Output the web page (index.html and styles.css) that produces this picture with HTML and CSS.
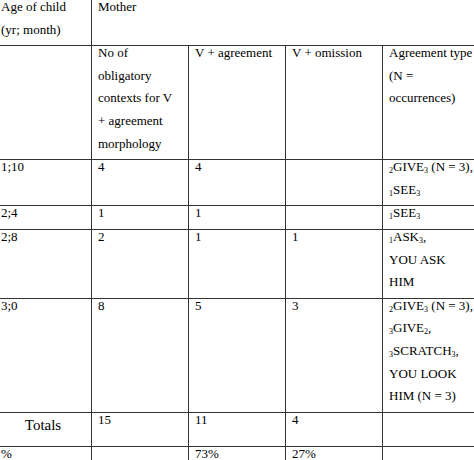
FILE: index.html
```html
<!DOCTYPE html>
<html lang="en">
<head>
<meta charset="utf-8">
<title>Agreement table</title>
<link rel="stylesheet" href="styles.css">
</head>
<body>
<table class="data">
  <colgroup>
    <col class="c"><col class="c"><col class="c"><col class="c"><col class="c">
  </colgroup>
  <tbody>
    <tr>
      <td><div class="t">Age of child (yr; month)</div></td>
      <td colspan="4"><div class="t">Mother</div></td>
    </tr>
    <tr>
      <td></td>
      <td><div class="t">No of obligatory contexts for V + agreement morphology</div></td>
      <td><div class="t">V + agreement</div></td>
      <td><div class="t">V + omission</div></td>
      <td><div class="t nw">Agreement type<br>(N =<br>occurrences)</div></td>
    </tr>
    <tr>
      <td><div class="t">1;10</div></td>
      <td><div class="t">4</div></td>
      <td><div class="t">4</div></td>
      <td></td>
      <td><div class="t nw"><sub>2</sub>GIVE<sub>3</sub> (N = 3),<br><sub>1</sub>SEE<sub>3</sub></div></td>
    </tr>
    <tr>
      <td><div class="t">2;4</div></td>
      <td><div class="t">1</div></td>
      <td><div class="t">1</div></td>
      <td></td>
      <td><div class="t nw"><sub>1</sub>SEE<sub>3</sub></div></td>
    </tr>
    <tr>
      <td><div class="t">2;8</div></td>
      <td><div class="t">2</div></td>
      <td><div class="t">1</div></td>
      <td><div class="t">1</div></td>
      <td><div class="t nw"><sub>1</sub>ASK<sub>3</sub>,<br>YOU ASK<br>HIM</div></td>
    </tr>
    <tr>
      <td><div class="t">3;0</div></td>
      <td><div class="t">8</div></td>
      <td><div class="t">5</div></td>
      <td><div class="t">3</div></td>
      <td><div class="t nw"><sub>2</sub>GIVE<sub>3</sub> (N = 3),<br><sub>3</sub>GIVE<sub>2</sub>,<br><sub>3</sub>SCRATCH<sub>3</sub>,<br>YOU LOOK<br>HIM (N = 3)</div></td>
    </tr>
    <tr class="totals">
      <td class="tot-label"><div class="tl">Totals</div></td>
      <td><div class="t">15</div></td>
      <td><div class="t">11</div></td>
      <td><div class="t">4</div></td>
      <td></td>
    </tr>
    <tr>
      <td><div class="t">%</div></td>
      <td></td>
      <td><div class="t">73%</div></td>
      <td><div class="t">27%</div></td>
      <td></td>
    </tr>
  </tbody>
</table>
</body>
</html>
```
FILE: styles.css
```css
html, body {
  margin: 0;
  padding: 0;
  background: #ffffff;
  overflow: hidden;
}

.data {
  border-collapse: collapse;
  table-layout: fixed;
  width: 485px;
  margin-left: -6px;
  margin-top: -1px;
  font-family: "Liberation Serif", "Times New Roman", serif;
  font-size: 13px;
  line-height: 22.6px;
  color: #000000;
}

.data col.c {
  width: 97px;
}

.data td {
  border: 1px solid #333333;
  padding: 0 6px;
  vertical-align: top;
  text-align: left;
}

.t {
  margin-top: -4px;
  margin-bottom: 4px;
}

.nw {
  white-space: nowrap;
}

.t sub {
  font-size: 8px;
  line-height: 0;
  vertical-align: -2px;
}

.data .totals td {
  height: 33px;
}

.data td.tot-label {
  text-align: center;
}

.tl {
  font-size: 15px;
  margin-top: 1px;
}
```
